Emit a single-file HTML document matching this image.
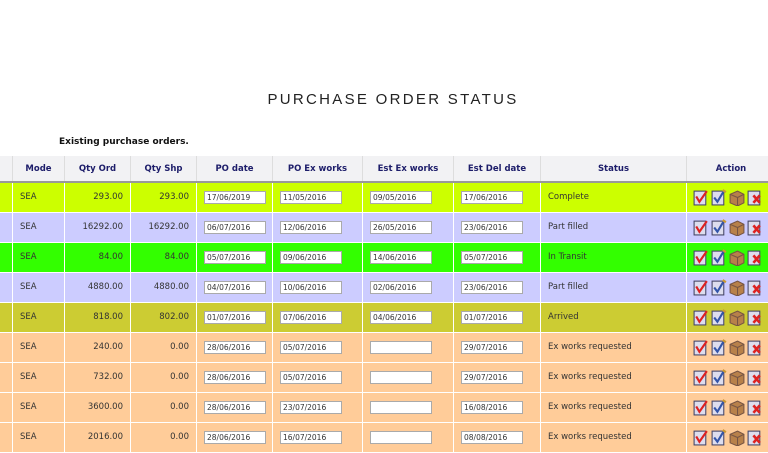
<!DOCTYPE html>
<html><head><style>
body{margin:0;width:768px;height:436px;overflow:hidden;background:#fff;font-family:"DejaVu Sans","Liberation Sans",sans-serif;position:relative}
.title{position:absolute;top:91px;left:0;width:786px;text-align:center;font-family:"Liberation Sans",sans-serif;font-size:15px;letter-spacing:2.3px;color:#222}
.sub{position:absolute;top:137px;left:59px;font-size:9px;font-weight:bold;color:#111}
table{position:absolute;top:156px;left:-2px;width:776px;border-collapse:collapse;font-size:8.5px;color:#333;table-layout:fixed}
td,th{box-sizing:border-box;border-right:1px solid #fff;padding:0 7px;white-space:nowrap;overflow:hidden;vertical-align:middle;line-height:12px}
th{height:26px;background:#f2f2f4;color:#1d1d6a;font-size:8.5px;border-right:1px solid #ddd;border-bottom:2px solid #999;text-align:center}
td{height:30px;border-bottom:1px solid #fff}
.r{text-align:right}
.in{display:inline-block;width:58px;height:11px;background:#fff;border:1px solid #aaa;font-size:7.5px;line-height:11px;padding-left:2px;color:#333;vertical-align:middle}
.ic{display:inline-block;width:16px;height:17px;margin-right:2px;vertical-align:middle}
</style></head><body>
<div class="title">PURCHASE ORDER STATUS</div>
<div class="sub">Existing purchase orders.</div>
<table>
<tr><th style="width:13px"></th><th style="width:52px">Mode</th><th style="width:66px">Qty Ord</th><th style="width:66px">Qty Shp</th><th style="width:76px">PO date</th><th style="width:90px">PO Ex works</th><th style="width:91px">Est Ex works</th><th style="width:87px">Est Del date</th><th style="width:146px">Status</th><th style="width:89px">Action</th></tr>
</table>
<script>
var rows=[["#ccff00","293.00","293.00","17/06/2019","11/05/2016","09/05/2016","17/06/2016","Complete"],
["#ccccff","16292.00","16292.00","06/07/2016","12/06/2016","26/05/2016","23/06/2016","Part filled"],
["#33ff00","84.00","84.00","05/07/2016","09/06/2016","14/06/2016","05/07/2016","In Transit"],
["#ccccff","4880.00","4880.00","04/07/2016","10/06/2016","02/06/2016","23/06/2016","Part filled"],
["#cccc33","818.00","802.00","01/07/2016","07/06/2016","04/06/2016","01/07/2016","Arrived"],
["#ffcc99","240.00","0.00","28/06/2016","05/07/2016","","29/07/2016","Ex works requested"],
["#ffcc99","732.00","0.00","28/06/2016","05/07/2016","","29/07/2016","Ex works requested"],
["#ffcc99","3600.00","0.00","28/06/2016","23/07/2016","","16/08/2016","Ex works requested"],
["#ffcc99","2016.00","0.00","28/06/2016","16/07/2016","","08/08/2016","Ex works requested"]];
var icons='<svg class="ic" viewBox="0 0 15 16"><rect x="1" y="2" width="11" height="13" fill="#dde" stroke="#446"/><path d="M3 7l3 5 7-10" stroke="#d22" stroke-width="2" fill="none"/></svg>'+
'<svg class="ic" viewBox="0 0 15 16"><rect x="1" y="2" width="11" height="13" fill="#dde" stroke="#446"/><path d="M3 8l3 4 6-10" stroke="#35a" stroke-width="2" fill="none"/><path d="M11 1l3 2" stroke="#c93" stroke-width="2"/></svg>'+
'<svg class="ic" viewBox="0 0 15 16"><path d="M1 5l7-3 6 3v8l-6 3-7-3z" fill="#b8814a" stroke="#754"/><path d="M1 5l7 3 6-3M8 8v8" stroke="#754" fill="none"/></svg>'+
'<svg class="ic" viewBox="0 0 15 16"><rect x="1" y="2" width="11" height="13" fill="#dde" stroke="#446"/><path d="M6 6l6 7M12 6l-6 7" stroke="#d22" stroke-width="2.5"/></svg>';
var h='';rows.forEach(function(r){h+='<tr style="background:'+r[0]+'"><td></td><td>SEA</td><td class="r">'+r[1]+'</td><td class="r">'+r[2]+'</td>';
for(var i=3;i<7;i++)h+='<td><span class="in">'+r[i]+'</span></td>';
h+='<td>'+r[7]+'</td><td style="padding-left:6px">'+icons+'</td></tr>';});
document.querySelector('table').insertAdjacentHTML('beforeend',h);
</script>
</body></html>
